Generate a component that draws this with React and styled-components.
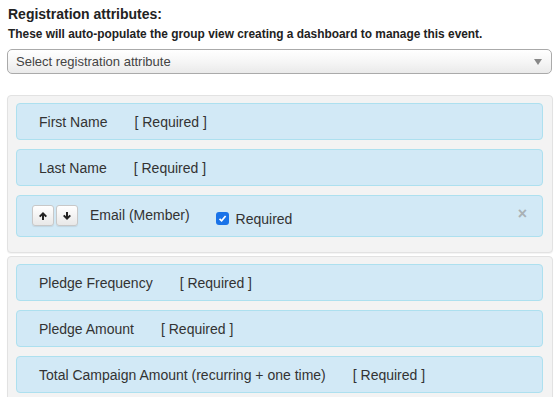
import React from "react";
import styled, { createGlobalStyle } from "styled-components";

const GlobalStyle = createGlobalStyle`
  body {
    margin: 0;
    background: #ffffff;
    font-family: "Liberation Sans", Arial, Helvetica, sans-serif;
    color: #333333;
  }
`;

const Page = styled.div`
  padding: 4px 7px 0 7px;
  height: 397px;
  overflow: hidden;
  box-sizing: border-box;
`;

const Title = styled.h3`
  margin: 0 0 0 1px;
  font-size: 14px;
  line-height: 20px;
  font-weight: bold;
  color: #222;
`;

const Subtitle = styled.p`
  margin: 2px 0 0 1px;
  font-size: 11.9px;
  line-height: 16px;
  font-weight: bold;
  color: #222;
`;

const SelectBox = styled.div`
  margin-top: 7px;
  height: 25px;
  width: 545px;
  box-sizing: border-box;
  border: 1px solid #aaaaaa;
  border-radius: 5px;
  background: linear-gradient(to bottom, #ffffff 0%, #f6f6f6 50%, #eaeaea 100%);
  display: flex;
  align-items: center;
  justify-content: space-between;
  padding: 0 9px 0 8px;
  font-size: 13px;
  color: #444;
`;

const Caret = styled.span`
  width: 0;
  height: 0;
  border-left: 4px solid transparent;
  border-right: 4px solid transparent;
  border-top: 6px solid #888;
`;

const Panel = styled.div`
  margin-top: ${(p) => p.$top}px;
  width: 546px;
  box-sizing: border-box;
  background: #f3f3f3;
  border: 1px solid #e2e2e2;
  border-radius: 4px;
  box-shadow: 0 1px 1px rgba(0, 0, 0, 0.05);
  padding: 7px 9px 15px 8px;
  display: flex;
  flex-direction: column;
  gap: 9px;
`;

const Item = styled.div`
  height: ${(p) => (p.$tall ? 42 : 37)}px;
  box-sizing: border-box;
  background: #d2e9f6;
  border: 1px solid #ade0ef;
  border-radius: 4px;
  display: flex;
  align-items: center;
  padding: 0 15px 0 ${(p) => (p.$tall ? 15 : 22)}px;
  font-size: 14px;
  color: #333;
`;

const Label = styled.span`
  margin-right: 27px;
`;

const Muted = styled.span``;

const ArrowGroup = styled.div`
  display: flex;
  gap: 2px;
  margin-right: 12px;
  margin-top: -1px;
`;

const ArrowButton = styled.button`
  width: 22px;
  height: 21px;
  padding: 0;
  border: 1px solid #c8c8c8;
  border-radius: 3px;
  background: linear-gradient(to bottom, #ffffff 0%, #e8e8e8 100%);
  box-shadow: 0 1px 1px rgba(0, 0, 0, 0.08);
  display: flex;
  align-items: center;
  justify-content: center;
`;

const EmailLabel = styled.span`
  margin-top: -3px;
  margin-right: 26px;
`;

const CheckLabel = styled.label`
  display: flex;
  align-items: center;
  gap: 7px;
  margin-top: 5px;
`;

const Check = styled.span`
  width: 13px;
  height: 13px;
  border-radius: 3px;
  background: #1a73e8;
  display: flex;
  align-items: center;
  justify-content: center;
`;

const Remove = styled.span`
  margin-left: auto;
  margin-top: -4px;
  font-size: 16px;
  font-weight: bold;
  color: #a9b1b5;
`;

const Arrow = ({ down }) => (
  <svg width="10" height="10" viewBox="0 0 10 10">
    <g transform={down ? "rotate(180 5 5)" : undefined}>
      <path d="M5 1 L9 5 L7.6 6.3 L6 4.8 V9 H4 V4.8 L2.4 6.3 L1 5 Z" fill="#222" />
    </g>
  </svg>
);

const panelOne = ["First Name", "Last Name"];

const panelTwo = [
  "Pledge Frequency",
  "Pledge Amount",
  "Total Campaign Amount (recurring + one time)",
];

export default function App() {
  return (
    <>
      <GlobalStyle />
      <Page>
        <Title>Registration attributes:</Title>
        <Subtitle>
          These will auto-populate the group view creating a dashboard to manage this event.
        </Subtitle>
        <SelectBox>
          <span>Select registration attribute</span>
          <Caret />
        </SelectBox>

        <Panel $top={21}>
          {panelOne.map((label) => (
            <Item key={label}>
              <Label>{label}</Label>
              <Muted>[ Required ]</Muted>
            </Item>
          ))}
          <Item $tall>
            <ArrowGroup>
              <ArrowButton>
                <Arrow />
              </ArrowButton>
              <ArrowButton>
                <Arrow down />
              </ArrowButton>
            </ArrowGroup>
            <EmailLabel>Email (Member)</EmailLabel>
            <CheckLabel>
              <Check>
                <svg width="9" height="9" viewBox="0 0 9 9">
                  <path d="M1.5 4.8 L3.6 6.8 L7.6 2" stroke="#fff" strokeWidth="1.7" fill="none" />
                </svg>
              </Check>
              Required
            </CheckLabel>
            <Remove>×</Remove>
          </Item>
        </Panel>

        <Panel $top={3}>
          {panelTwo.map((label) => (
            <Item key={label}>
              <Label>{label}</Label>
              <Muted>[ Required ]</Muted>
            </Item>
          ))}
        </Panel>
      </Page>
    </>
  );
}
